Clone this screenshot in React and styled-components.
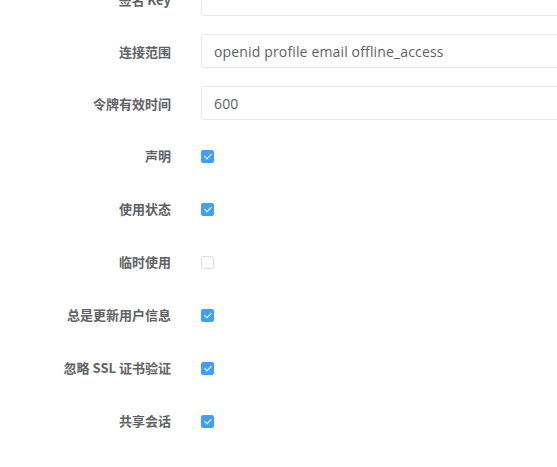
import React from "react";
import styled, { createGlobalStyle } from "styled-components";

const GlobalStyle = createGlobalStyle`
    html, body {
        margin: 0;
        padding: 0;
        background: #fff;
        overflow: hidden;
    }
    body {
        font-family: "Noto Sans CJK SC", "Open Sans", sans-serif;
    }
`;

const fields = [
    { label: "签名 Key", type: "input", value: "" },
    { label: "连接范围", type: "input", value: "openid profile email offline_access" },
    { label: "令牌有效时间", type: "input", value: "600" },
    { label: "声明", type: "checkbox", checked: true },
    { label: "使用状态", type: "checkbox", checked: true },
    { label: "临时使用", type: "checkbox", checked: false },
    { label: "总是更新用户信息", type: "checkbox", checked: true },
    { label: "忽略 SSL 证书验证", type: "checkbox", checked: true },
    { label: "共享会话", type: "checkbox", checked: true },
];

function App() {
    return (
        <>
            <GlobalStyle />
            <Form>
                {fields.map(({ label, type, value, checked }) => (
                    <FormItem key={label} $tall={type === "checkbox"}>
                        <Label>{label}</Label>
                        <Content>
                            {type === "input" ? (
                                <Input readOnly value={value} />
                            ) : (
                                <Checkbox $checked={checked} />
                            )}
                        </Content>
                    </FormItem>
                ))}
            </Form>
        </>
    );
}

export default App;

const Form = styled.form`
    display: flex;
    flex-direction: column;
    gap: 18px;
    width: 760px;
    margin-top: -18px;
`;

const FormItem = styled.div`
    display: flex;
    align-items: center;
    height: ${({ $tall }) => ($tall ? "35px" : "34px")};
`;

const Label = styled.label`
    width: 171px;
    padding-right: 30px;
    text-align: right;
    font-size: 13px;
    font-weight: 700;
    color: #606266;
    white-space: nowrap;
`;

const Content = styled.div`
    flex: 1;
    display: flex;
    align-items: center;
    height: 100%;
`;

const Input = styled.input`
    box-sizing: border-box;
    width: 100%;
    height: 34px;
    padding: 0 12px;
    border: 1px solid #e4e7ed;
    border-radius: 3px;
    font-family: "Open Sans", "Noto Sans CJK SC", sans-serif;
    font-size: 14px;
    letter-spacing: 0.15px;
    color: #606266;
    outline: none;
`;

const Checkbox = styled.span`
    position: relative;
    box-sizing: border-box;
    display: inline-block;
    width: 13px;
    height: 13px;
    margin-top: 2px;
    border-radius: 2px;
    border: 1px solid ${({ $checked }) => ($checked ? "#409eff" : "#dcdfe6")};
    background: ${({ $checked }) => ($checked ? "#409eff" : "#fff")};

    &::after {
        content: "";
        display: ${({ $checked }) => ($checked ? "block" : "none")};
        position: absolute;
        left: 3.5px;
        top: 1px;
        width: 3px;
        height: 6px;
        border: 1px solid #fff;
        border-left: 0;
        border-top: 0;
        transform: rotate(45deg);
    }
`;
